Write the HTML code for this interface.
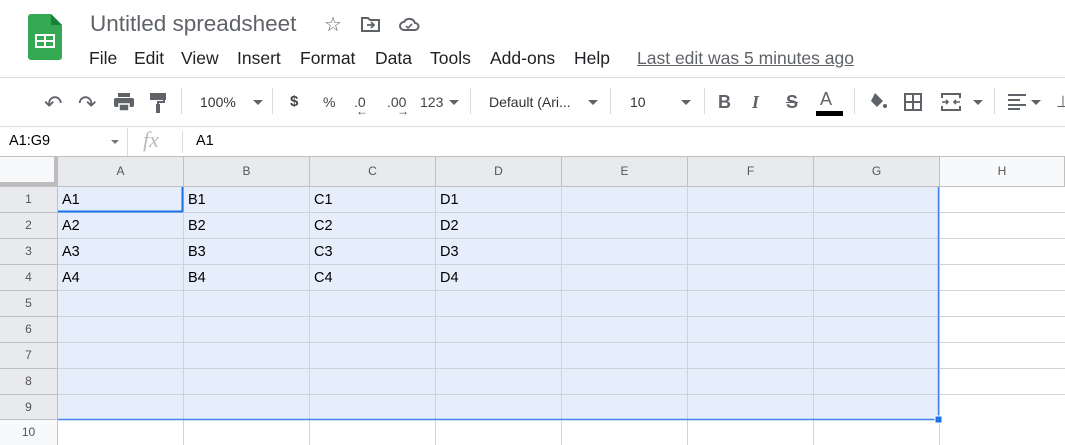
<!DOCTYPE html><html><head><meta charset="utf-8"><style>
*{margin:0;padding:0;box-sizing:border-box}
body{width:1065px;height:445px;overflow:hidden;background:#fff;font-family:"Liberation Sans",Arial,sans-serif;position:relative;color:#202124}
.a{position:absolute}
.m{position:absolute;top:48px;font-size:17.5px;color:#202124;white-space:nowrap}
.tb{color:#444;font-size:14px}
.sep{position:absolute;top:88px;width:1px;height:26px;background:#dadce0}
.ch{position:absolute;top:157px;height:29px;border-right:1px solid #c0c0c0;background:#e8eaed;font-size:12px;color:#555;text-align:center;line-height:29px}
.rh{position:absolute;left:0;width:58px;border-bottom:1px solid #c0c0c0;border-right:1px solid #c0c0c0;background:#e8eaed;font-size:12px;color:#555;text-align:center}
.cell{position:absolute;font-size:14.5px;color:#000}
</style></head><body>
<svg class="a" style="left:28px;top:14px" width="34" height="46" viewBox="0 0 34 46"><path d="M3 0h20l11 11v32a3 3 0 0 1-3 3H3a3 3 0 0 1-3-3V3a3 3 0 0 1 3-3z" fill="#34a853"/><path d="M23 0v11h11z" fill="#188038"/><rect x="7" y="20" width="20" height="14" fill="#fff"/><rect x="9" y="22" width="7" height="4" fill="#34a853"/><rect x="18" y="22" width="7" height="4" fill="#34a853"/><rect x="9" y="28" width="7" height="4" fill="#34a853"/><rect x="18" y="28" width="7" height="4" fill="#34a853"/></svg>
<div class="a" style="left:90px;top:11px;font-size:22.5px;color:#5f6368">Untitled spreadsheet</div>
<div class="a" style="left:324px;top:12px;font-size:20px;color:#5f6368">☆</div>
<svg class="a" style="left:361px;top:16px" width="20" height="16"><path d="M1 2h6l2 2h9v11H1z" fill="none" stroke="#5f6368" stroke-width="2"/><path d="M6 9h7M10 6l3 3-3 3" fill="none" stroke="#5f6368" stroke-width="1.8"/></svg>
<svg class="a" style="left:398px;top:16px" width="22" height="16"><path d="M6 14a4 4 0 0 1 0-8 6 6 0 0 1 11 1 3.5 3.5 0 0 1 0 7z" fill="none" stroke="#5f6368" stroke-width="2"/><path d="M8 10l2 2 4-4" fill="none" stroke="#5f6368" stroke-width="1.6"/></svg>
<div class="m" style="left:89px">File</div><div class="m" style="left:134px">Edit</div><div class="m" style="left:181px">View</div><div class="m" style="left:237px">Insert</div><div class="m" style="left:300px">Format</div><div class="m" style="left:375px">Data</div><div class="m" style="left:430px">Tools</div><div class="m" style="left:490px">Add-ons</div><div class="m" style="left:574px">Help</div>
<div class="a" style="left:637px;top:48px;font-size:17.5px;color:#5f6368;text-decoration:underline">Last edit was 5 minutes ago</div>
<div class="a" style="left:0;top:77px;width:1065px;height:1px;background:#dadce0"></div>
<div class="a tb" style="left:44px;top:91px;font-size:22px;color:#5f6368">↶</div>
<div class="a tb" style="left:78px;top:91px;font-size:22px;color:#5f6368">↷</div>
<svg class="a" style="left:114px;top:93px" width="20" height="18"><rect x="4" y="0" width="12" height="4" fill="#5f6368"/><rect x="0" y="5" width="20" height="9" rx="2" fill="#5f6368"/><rect x="5" y="11" width="10" height="7" fill="#5f6368" stroke="#fff" stroke-width="1.5"/></svg>
<svg class="a" style="left:150px;top:93px" width="16" height="20"><rect x="0" y="0" width="16" height="7" fill="#5f6368"/><path d="M14 5v4H8v3" fill="none" stroke="#5f6368" stroke-width="2"/><rect x="6" y="11" width="4" height="9" fill="#5f6368"/></svg>
<div class="sep" style="left:181px"></div>
<div class="a tb" style="left:200px;top:94px;color:#333">100%</div>
<div class="a" style="left:253px;top:100px;border:5px solid transparent;border-top-color:#5f6368"></div>
<div class="sep" style="left:272px"></div>
<div class="a tb" style="left:290px;top:93px;font-weight:bold;font-size:15px">$</div>
<div class="a tb" style="left:323px;top:94px">%</div>
<div class="a tb" style="left:354px;top:94px">.0<span style="position:absolute;left:2px;top:10px;font-size:12px">←</span></div>
<div class="a tb" style="left:387px;top:94px">.00<span style="position:absolute;left:10px;top:10px;font-size:12px">→</span></div>
<div class="a tb" style="left:420px;top:94px">123</div>
<div class="a" style="left:449px;top:100px;border:5px solid transparent;border-top-color:#5f6368"></div>
<div class="sep" style="left:470px"></div>
<div class="a tb" style="left:489px;top:94px;color:#333">Default (Ari...</div>
<div class="a" style="left:588px;top:100px;border:5px solid transparent;border-top-color:#5f6368"></div>
<div class="sep" style="left:610px"></div>
<div class="a tb" style="left:630px;top:94px;color:#333">10</div>
<div class="a" style="left:681px;top:100px;border:5px solid transparent;border-top-color:#5f6368"></div>
<div class="sep" style="left:704px"></div>
<div class="a" style="left:718px;top:92px;font-size:18px;font-weight:bold;color:#5f6368">B</div>
<div class="a" style="left:752px;top:92px;font-size:18px;font-style:italic;font-family:'Liberation Serif',serif;color:#5f6368;font-weight:bold">I</div>
<div class="a" style="left:786px;top:92px;font-size:18px;text-decoration:line-through;color:#5f6368;font-weight:bold">S</div>
<div class="a" style="left:820px;top:89px;font-size:18px;color:#5f6368">A</div>
<div class="a" style="left:816px;top:111px;width:27px;height:5px;background:#000"></div>
<div class="sep" style="left:854px"></div>
<svg class="a" style="left:868px;top:92px" width="20" height="18"><path d="M7 1l8 8-6 6-6-6z" fill="#5f6368"/><circle cx="17" cy="14" r="2" fill="#5f6368"/></svg>
<svg class="a" style="left:904px;top:93px" width="18" height="18"><rect x="1" y="1" width="16" height="16" fill="none" stroke="#5f6368" stroke-width="2"/><path d="M9 1v16M1 9h16" stroke="#5f6368" stroke-width="2"/></svg>
<svg class="a" style="left:941px;top:93px" width="20" height="18"><path d="M1 5V1h18v4M1 13v4h18v-4" fill="none" stroke="#5f6368" stroke-width="2"/><path d="M1 9h6M19 9h-6M5 7l2 2-2 2M15 7l-2 2 2 2" fill="none" stroke="#5f6368" stroke-width="1.6"/></svg>
<div class="a" style="left:973px;top:100px;border:5px solid transparent;border-top-color:#5f6368"></div>
<div class="sep" style="left:994px"></div>
<svg class="a" style="left:1008px;top:94px" width="18" height="16"><path d="M0 1h18M0 6h12M0 11h18M0 15h12" stroke="#5f6368" stroke-width="2"/></svg>
<div class="a" style="left:1031px;top:100px;border:5px solid transparent;border-top-color:#5f6368"></div>
<div class="a" style="left:1056px;top:92px;font-size:16px;color:#5f6368">⊥</div>
<div class="a" style="left:0;top:126px;width:1065px;height:1px;background:#dadce0"></div>
<div class="a" style="left:9px;top:133px;font-size:14.5px;color:#000">A1:G9</div>
<div class="a" style="left:111px;top:140px;border:4px solid transparent;border-top-color:#777"></div>
<div class="a" style="left:127px;top:128px;width:1px;height:28px;background:#dadce0"></div>
<div class="a" style="left:143px;top:127px;font-size:22px;font-style:italic;font-family:'Liberation Serif',serif;color:#bbb">fx</div>
<div class="a" style="left:182px;top:131px;width:1px;height:22px;background:#dadce0"></div>
<div class="a" style="left:196px;top:133px;font-size:14.5px;color:#000">A1</div>
<div class="a" style="left:0;top:156px;width:1065px;height:1px;background:#c0c0c0"></div>
<div class="ch" style="left:0;width:58px;border-right:4px solid #bdbdbd;border-bottom:4px solid #bdbdbd;background:#f8f9fa"></div>
<div class="ch" style="left:58px;width:126px">A</div>
<div class="ch" style="left:184px;width:126px">B</div>
<div class="ch" style="left:310px;width:126px">C</div>
<div class="ch" style="left:436px;width:126px">D</div>
<div class="ch" style="left:562px;width:126px">E</div>
<div class="ch" style="left:688px;width:126px">F</div>
<div class="ch" style="left:814px;width:126px">G</div>
<div class="ch" style="left:940px;width:125px;background:#f8f9fa">H</div>
<div class="a" style="left:0;top:186px;width:1065px;height:1px;background:#c0c0c0"></div>
<div class="a" style="left:58px;top:187px;width:881px;height:232px;background:#e6eefc"></div>
<svg class="a" style="left:0;top:0" width="1065" height="445">
<g stroke="#d0d4da" stroke-width="1">
<line x1="58" y1="212.5" x2="1065" y2="212.5"/><line x1="58" y1="238.5" x2="1065" y2="238.5"/><line x1="58" y1="264.5" x2="1065" y2="264.5"/><line x1="58" y1="290.5" x2="1065" y2="290.5"/><line x1="58" y1="316.5" x2="1065" y2="316.5"/><line x1="58" y1="342.5" x2="1065" y2="342.5"/><line x1="58" y1="368.5" x2="1065" y2="368.5"/><line x1="58" y1="394.5" x2="1065" y2="394.5"/>
<line x1="183.5" y1="187" x2="183.5" y2="445"/><line x1="309.5" y1="187" x2="309.5" y2="445"/><line x1="435.5" y1="187" x2="435.5" y2="445"/><line x1="561.5" y1="187" x2="561.5" y2="445"/><line x1="687.5" y1="187" x2="687.5" y2="445"/><line x1="813.5" y1="187" x2="813.5" y2="445"/><line x1="939.5" y1="187" x2="939.5" y2="445"/>
</g>
<line x1="58" y1="419.5" x2="939" y2="419.5" stroke="#4285f4" stroke-width="1.5"/>
<line x1="938.5" y1="187" x2="938.5" y2="419" stroke="#4285f4" stroke-width="1.5"/>
<line x1="58" y1="211.5" x2="183" y2="211.5" stroke="#1a73e8" stroke-width="2"/>
<line x1="182.5" y1="187" x2="182.5" y2="212" stroke="#1a73e8" stroke-width="2"/>
<rect x="935" y="416" width="7" height="7" fill="#1a73e8" stroke="#fff" stroke-width="1"/>
</svg>
<div class="rh" style="top:187px;height:26px;line-height:25px">1</div>
<div class="rh" style="top:213px;height:26px;line-height:25px">2</div>
<div class="rh" style="top:239px;height:26px;line-height:25px">3</div>
<div class="rh" style="top:265px;height:26px;line-height:25px">4</div>
<div class="rh" style="top:291px;height:26px;line-height:25px">5</div>
<div class="rh" style="top:317px;height:26px;line-height:25px">6</div>
<div class="rh" style="top:343px;height:26px;line-height:25px">7</div>
<div class="rh" style="top:369px;height:26px;line-height:25px">8</div>
<div class="rh" style="top:395px;height:25px;line-height:24px">9</div>
<div class="rh" style="top:420px;height:25px;line-height:25px;background:#f8f9fa;border-bottom:none">10</div>
<div class="cell" style="left:62px;top:192px">A1</div><div class="cell" style="left:188px;top:192px">B1</div><div class="cell" style="left:314px;top:192px">C1</div><div class="cell" style="left:440px;top:192px">D1</div>
<div class="cell" style="left:62px;top:218px">A2</div><div class="cell" style="left:188px;top:218px">B2</div><div class="cell" style="left:314px;top:218px">C2</div><div class="cell" style="left:440px;top:218px">D2</div>
<div class="cell" style="left:62px;top:244px">A3</div><div class="cell" style="left:188px;top:244px">B3</div><div class="cell" style="left:314px;top:244px">C3</div><div class="cell" style="left:440px;top:244px">D3</div>
<div class="cell" style="left:62px;top:270px">A4</div><div class="cell" style="left:188px;top:270px">B4</div><div class="cell" style="left:314px;top:270px">C4</div><div class="cell" style="left:440px;top:270px">D4</div>
</body></html>
